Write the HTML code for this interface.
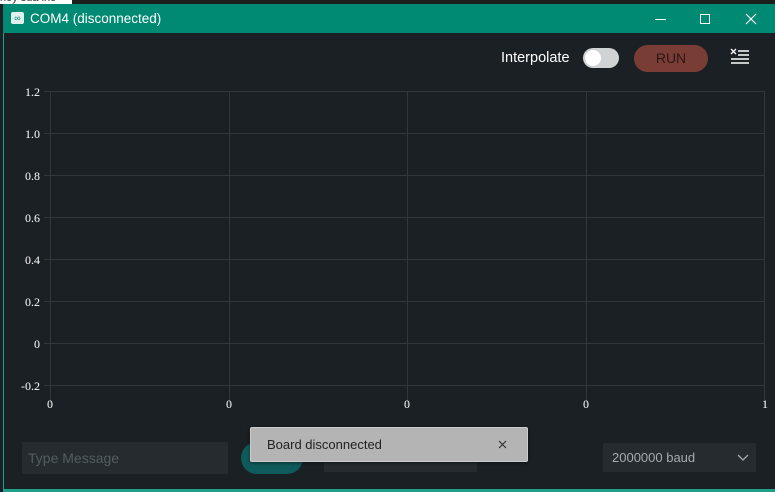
<!DOCTYPE html><html><head><style>
*{margin:0;padding:0;box-sizing:border-box}
body{width:775px;height:492px;overflow:hidden;background:#1b2024;font-family:"Liberation Sans",sans-serif;position:relative}
.abs{position:absolute}
.yl{position:absolute;right:735px;font:12px "Liberation Serif",serif;color:#fff;width:40px;text-align:right}
.xl{position:absolute;top:397px;font:12px "Liberation Serif",serif;color:#fff;width:20px;text-align:center}
</style></head><body>
<div class="abs" style="left:0;top:0;width:72px;height:4px;background:#fff;overflow:hidden"><div style="font-size:11px;color:#333;margin-top:-8px">hoy sua lno</div></div>
<div class="abs" style="left:72px;top:0;width:703px;height:4px;background:#1e1e1e"></div>
<div class="abs" style="left:3px;top:4px;width:772px;height:29px;background:#008a73"></div>
<div class="abs" style="left:3px;top:33px;width:1px;height:458px;background:#1fa08a"></div>
<div class="abs" style="left:3px;top:489px;width:772px;height:3px;background:#1fa08a"></div>
<div class="abs" style="left:11px;top:12px;width:13px;height:12px;background:#e0f0ee;border-radius:2px;color:#008a73;font-size:9px;line-height:12px;text-align:center">∞</div>
<div class="abs" style="left:30px;top:11px;color:#fff;font-size:13.5px">COM4 (disconnected)</div>
<div class="abs" style="left:655px;top:19px;width:11px;height:1px;background:#fff"></div>
<div class="abs" style="left:700px;top:14px;width:10px;height:10px;border:1px solid #fff"></div>
<svg class="abs" style="left:745px;top:13px" width="12" height="12"><path d="M1 1L11 11M11 1L1 11" stroke="#fff" stroke-width="1.2"/></svg>
<div class="abs" style="left:501px;top:50px;color:#fff;font-size:14.5px">Interpolate</div>
<div class="abs" style="left:583px;top:48px;width:36px;height:20px;border-radius:10px;background:#cfd3d4"><div style="position:absolute;left:2px;top:2px;width:16px;height:16px;border-radius:50%;background:#fff"></div></div>
<div class="abs" style="left:634px;top:45px;width:74px;height:27px;border-radius:14px;background:#7a3d36;color:#2a1614;font-size:14px;line-height:27px;text-align:center">RUN</div>
<svg class="abs" style="left:730px;top:48px" width="20" height="18"><path d="M1 1L6 6M6 1L1 6" stroke="#fff" stroke-width="1.3"/><path d="M8 3H19M8 7H19M1 11H19M1 15H19" stroke="#fff" stroke-width="1.4"/></svg>
<svg class="abs" style="left:0;top:0" width="775" height="492">
<g stroke="#30383c" stroke-width="1">
<path d="M50.5 91V385M229.5 91V406M407.5 91V406M586.5 91V406M764.5 91V406M50.5 385V406"/>
<path d="M44 91.5H764M44 133.5H764M44 175.5H764M44 217.5H764M44 259.5H764M44 301.5H764M44 343.5H764M44 385.5H764"/>
</g></svg>
<div class="yl" style="top:85px">1.2</div>
<div class="yl" style="top:127px">1.0</div>
<div class="yl" style="top:169px">0.8</div>
<div class="yl" style="top:211px">0.6</div>
<div class="yl" style="top:253px">0.4</div>
<div class="yl" style="top:295px">0.2</div>
<div class="yl" style="top:337px">0</div>
<div class="yl" style="top:379px">-0.2</div>
<div class="xl" style="left:40px">0</div>
<div class="xl" style="left:219px">0</div>
<div class="xl" style="left:397px">0</div>
<div class="xl" style="left:576px">0</div>
<div class="xl" style="left:755px">1</div>
<div class="abs" style="left:22px;top:442px;width:206px;height:32px;background:#252b2e;color:#555d60;font-size:14px;line-height:32px;padding-left:6px">Type Message</div>
<div class="abs" style="left:241px;top:442px;width:62px;height:32px;border-radius:16px;background:#0f5a5a"></div>
<div class="abs" style="left:324px;top:442px;width:153px;height:30px;background:#252b2e"></div>
<div class="abs" style="left:603px;top:443px;width:153px;height:29px;background:#252b2e;color:#a5acaf;font-size:13px;line-height:29px;padding-left:9px">2000000 baud</div>
<svg class="abs" style="left:737px;top:454px" width="12" height="8"><path d="M1 1L6 6L11 1" stroke="#a5acaf" stroke-width="1.3" fill="none"/></svg>
<div class="abs" style="left:250px;top:427px;width:278px;height:35px;background:#b4b4b4;border:1px solid #ccc;border-radius:2px;box-shadow:0 1px 3px rgba(0,0,0,.5);color:#222;font-size:13px;line-height:33px;padding-left:16px">Board disconnected</div>
<svg class="abs" style="left:498px;top:440px" width="9" height="9"><path d="M1 1L8 8M8 1L1 8" stroke="#333" stroke-width="1.2"/></svg>
</body></html>
